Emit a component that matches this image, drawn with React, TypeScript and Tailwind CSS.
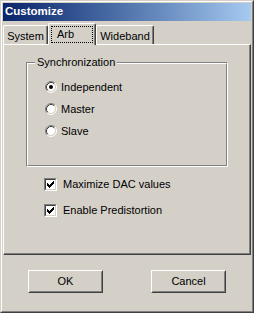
import { ReactNode } from 'react';

const font = { fontFamily: '"Liberation Sans", Arial, sans-serif' };

function Radio({ checked, label }: { checked?: boolean; label: string }) {
    return (
        <div className="flex h-[22px] items-center gap-[4px]">
            <svg width="12" height="12" viewBox="0 0 12 12" className="shrink-0">
                <circle cx="6" cy="6" r="4.5" fill="white" />
                <path d="M2.11 9.89 A5.5 5.5 0 0 1 9.89 2.11" stroke="#808080" fill="none" />
                <path d="M9.89 2.11 A5.5 5.5 0 0 1 2.11 9.89" stroke="#ffffff" fill="none" />
                <path d="M2.82 9.18 A4.5 4.5 0 0 1 9.18 2.82" stroke="#404040" fill="none" />
                <path d="M9.18 2.82 A4.5 4.5 0 0 1 2.82 9.18" stroke="#d4d0c8" fill="none" />
                {checked && <circle cx="6" cy="6" r="2" fill="black" />}
            </svg>
            <span>{label}</span>
        </div>
    );
}

function Check({ label }: { label: string }) {
    return (
        <div className="flex h-[26px] items-center gap-[6px]">
            <div className="h-[13px] w-[13px] shrink-0 border border-t-[#808080] border-r-white border-b-white border-l-[#808080]">
                <div className="flex h-full w-full items-center justify-center border border-t-[#404040] border-r-[#d4d0c8] border-b-[#d4d0c8] border-l-[#404040] bg-white">
                    <svg width="7" height="7" viewBox="0 0 7 7" shapeRendering="crispEdges">
                        <path
                            d="M6 0h1v1h-1z M5 1h2v1h-2z M0 2h1v1h-1z M4 2h3v1h-3z M0 3h2v1h-2z M3 3h3v1h-3z M0 4h5v1h-5z M1 5h3v1h-3z M2 6h1v1h-1z"
                            fill="black"
                        />
                    </svg>
                </div>
            </div>
            <span>{label}</span>
        </div>
    );
}

function Tab({ children, width, selected }: { children: ReactNode; width: string; selected?: boolean }) {
    return (
        <div
            className={`${width} ${
                selected ? 'relative z-10 -mb-px h-[22px] pt-[1px]' : 'h-[19px] pt-[2px]'
            } flex justify-center rounded-t-[2px] border-t border-l border-r border-t-white border-l-white border-r-[#404040] bg-[#d4d0c8] shadow-[inset_-1px_0_0_#808080]`}
        >
            {children}
        </div>
    );
}

function Button({ children }: { children: ReactNode }) {
    return (
        <div className="h-[23px] w-[75px] border border-t-white border-r-[#404040] border-b-[#404040] border-l-white">
            <div className="flex h-full w-full items-center justify-center border border-t-[#d4d0c8] border-r-[#808080] border-b-[#808080] border-l-[#d4d0c8] text-[11px] text-black">
                {children}
            </div>
        </div>
    );
}

export default function App() {
    return (
        <div
            style={font}
            className="h-[313px] w-[254px] border border-t-[#d4d0c8] border-r-[#404040] border-b-[#404040] border-l-[#d4d0c8] bg-[#d4d0c8] text-[11px] text-black"
        >
            <div className="flex h-full flex-col border border-t-white border-r-[#808080] border-b-[#808080] border-l-white p-px">
                {/* Barra de título */}
                <div className="flex h-[18px] items-center bg-gradient-to-r from-[#0a246a] to-[#a6caf0] pl-[2px] text-[11.5px] font-bold text-white">
                    Customize
                </div>

                {/* Pestañas */}
                <div className="mt-[2px] flex h-[21px] items-end">
                    <Tab width="w-[45px]">System</Tab>
                    <Tab width="w-[48px]" selected>
                        <div className="mt-[1px] h-[17px] w-[42px] border border-dotted border-black pl-[5px] leading-[15px]">
                            Arb
                        </div>
                    </Tab>
                    <Tab width="w-[58px]">Wideband</Tab>
                </div>

                {/* Panel */}
                <div className="h-[211px] border border-t-white border-r-[#404040] border-b-[#404040] border-l-white">
                    <div className="h-full border-r border-b border-r-[#808080] border-b-[#808080] pt-[17px]">
                        <div className="relative ml-[22px] h-[105px] w-[202px] border border-t-[#808080] border-r-white border-b-white border-l-[#808080]">
                            <div className="h-full border border-t-white border-r-[#808080] border-b-[#808080] border-l-white pt-[12px] pl-[17px]">
                                <Radio checked label="Independent" />
                                <Radio label="Master" />
                                <Radio label="Slave" />
                            </div>
                            <span className="absolute top-[-8px] left-[8px] bg-[#d4d0c8] px-[2px] leading-[14px]">
                                Synchronization
                            </span>
                        </div>
                        <div className="mt-[4px] pl-[40px]">
                            <Check label="Maximize DAC values" />
                            <Check label="Enable Predistortion" />
                        </div>
                    </div>
                </div>

                {/* Botones */}
                <div className="mt-[15px] flex justify-center gap-[48px]">
                    <Button>OK</Button>
                    <Button>Cancel</Button>
                </div>
            </div>
        </div>
    );
}
